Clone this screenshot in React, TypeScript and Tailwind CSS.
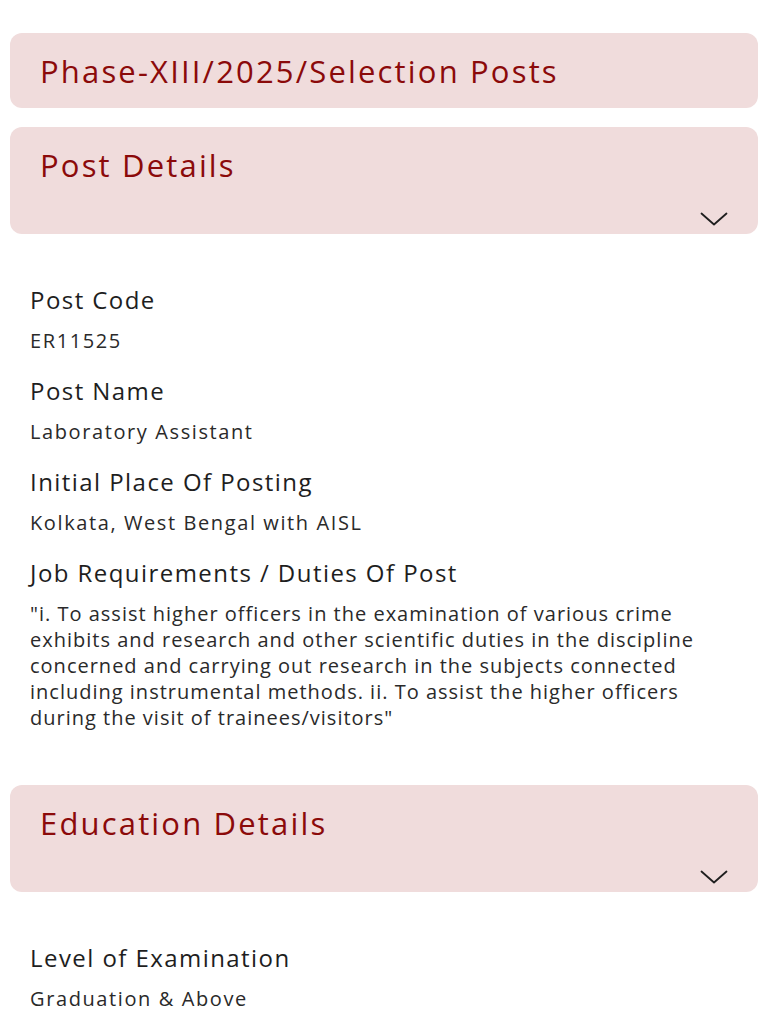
import React from "react";

const Chevron = () => (
  <svg width="28" height="14" viewBox="0 0 28 14" fill="none">
    <polyline points="1.5,1.5 14,12.5 26.5,1.5" stroke="#1f1f1f" strokeWidth="1.8" strokeLinecap="round" strokeLinejoin="round" />
  </svg>
);

const Field = ({ label, value, para }: { label: string; value: string; para?: boolean }) => (
  <div className="flex flex-col">
    <div className="text-[24px] leading-[32px] tracking-[0.06em] text-[#1e1e1e]">{label}</div>
    <div
      className={
        para
          ? "mt-[12px] text-[20px] leading-[26px] tracking-[0.05em] text-[#2a2a2a]"
          : "mt-[12px] text-[20px] leading-[26px] tracking-[0.08em] text-[#2a2a2a]"
      }
    >
      {value}
    </div>
  </div>
);

const Section = ({ title }: { title: string }) => (
  <div className="flex h-[107px] flex-col justify-between rounded-xl bg-[#f0dcdc] pl-[30px] pr-[30px] pt-[20px] pb-[8px]">
    <div className="text-[31px] leading-[36px] font-medium tracking-[0.07em] text-[#8b0a0a]">{title}</div>
    <div className="flex justify-end">
      <Chevron />
    </div>
  </div>
);

export default function App() {
  return (
    <div className="min-h-screen bg-white px-[10px] pt-[33px]" style={{ fontFamily: "'Open Sans', sans-serif" }}>
      <div className="flex h-[75px] items-center rounded-xl bg-[#f0dcdc] px-[30px]">
        <div className="text-[31px] leading-[36px] font-medium tracking-[0.07em] text-[#8b0a0a]">Phase-XIII/2025/Selection Posts</div>
      </div>
      <div className="mt-[19px]">
        <Section title="Post Details" />
      </div>
      <div className="mt-[50px] flex flex-col gap-[21px] px-[20px]">
        <Field label="Post Code" value="ER11525" />
        <Field label="Post Name" value="Laboratory Assistant" />
        <Field label="Initial Place Of Posting" value="Kolkata, West Bengal with AISL" />
        <Field
          para
          label="Job Requirements / Duties Of Post"
          value={'"i. To assist higher officers in the examination of various crime exhibits and research and other scientific duties in the discipline concerned and carrying out research in the subjects connected including instrumental methods. ii. To assist the higher officers during the visit of trainees/visitors"'}
        />
      </div>
      <div className="mt-[54px]">
        <Section title="Education Details" />
      </div>
      <div className="mt-[50px] flex flex-col gap-[21px] px-[20px]">
        <Field label="Level of Examination" value="Graduation & Above" />
      </div>
    </div>
  );
}
